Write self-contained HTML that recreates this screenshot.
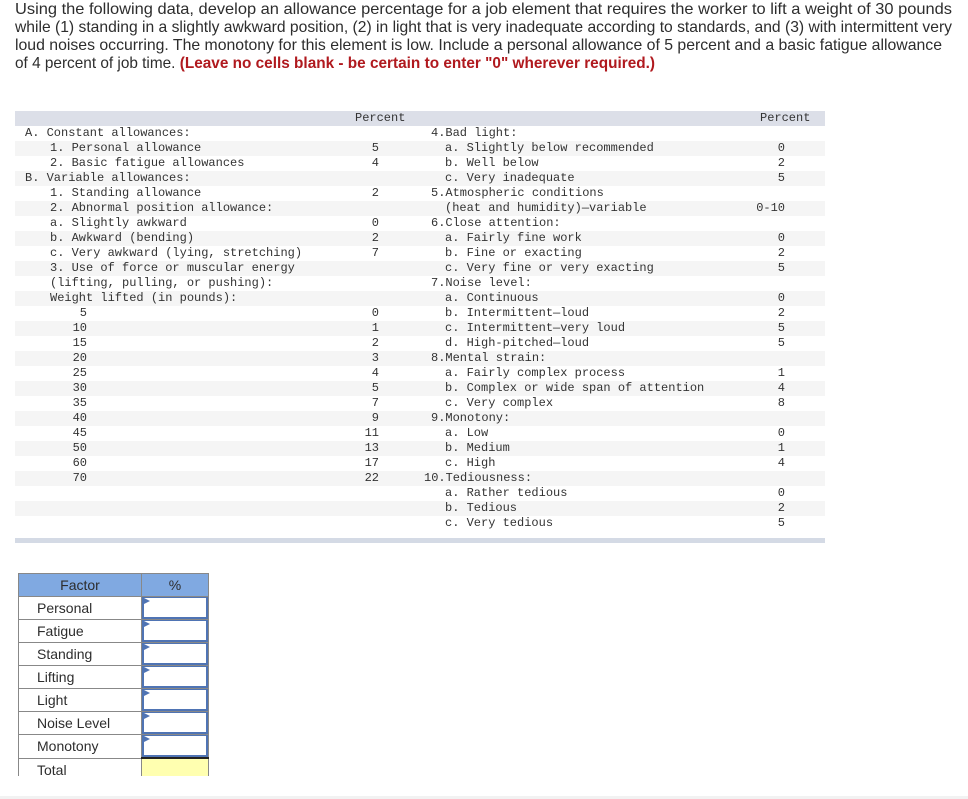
<!DOCTYPE html>
<html><head><meta charset="utf-8"><style>
body{margin:0;width:968px;height:799px;background:#fff;position:relative;overflow:hidden;font-family:"Liberation Sans",sans-serif;color:#2d2d2d}
.q{position:absolute;left:15px;top:1px;font-size:16px;line-height:18px;white-space:nowrap}
.q div{display:block;width:max-content;transform-origin:0 0}
.q b{color:#b0191e}
.tb{position:absolute;left:15px;top:111px;width:810px;font-family:"Liberation Mono",monospace;font-size:12px;color:#333}
.r{position:relative;height:15px;line-height:15px;white-space:pre}
.r:nth-child(odd){background:#f5f5f5}
.h{background:#dcdfe8!important}
.r span{position:absolute;top:0}
.a{left:10px}.b{left:35px}.n{width:72px;text-align:right;left:0}
.v{left:300px;width:64px;text-align:right}
.c{left:416px}.d{left:430px}.e{left:409px}
.w{left:700px;width:70px;text-align:right}
.bar{position:absolute;left:15px;top:538px;width:810px;height:5px;background:#d4dae5}
.ft{position:absolute;left:18px;top:573px;border-collapse:collapse;font-size:14px}
.ft td{border:1px solid #888;height:22px;padding:0}
.ft td.l{width:104px;padding-left:18px}
.ft td.p{width:66px;position:relative}
.ft th{background:#80a9e1;border:1px solid #888;height:22px;padding:0;font-weight:normal}
.in{position:absolute;left:0;top:0;right:0;bottom:0;border:2px solid #4f74b4;border-top-width:1px;background:#fff}
.in:before{content:"";position:absolute;left:0;top:0;border-left:6px solid #4f74b4;border-top:3px solid transparent;border-bottom:3px solid transparent}
</style></head><body>
<div class="q">
<div data-w="937">Using the following data, develop an allowance percentage for a job element that requires the worker to lift a weight of 30 pounds</div>
<div data-w="937">while (1) standing in a slightly awkward position, (2) in light that is very inadequate according to standards, and (3) with intermittent very</div>
<div data-w="927">loud noises occurring. The monotony for this element is low. Include a personal allowance of 5 percent and a basic fatigue allowance</div>
<div data-w="640">of 4 percent of job time. <b>(Leave no cells blank - be certain to enter "0" wherever required.)</b></div>
</div>
<script>
document.querySelectorAll('.q div').forEach(function(d){var w=d.getBoundingClientRect().width;var t=+d.getAttribute('data-w');if(w>0)d.style.transform='scaleX('+(t/w)+')';});
</script>
<div class="tb">
<div class="r h"><span class="v" style="left:340px;width:auto">Percent</span><span style="left:745px">Percent</span></div>
<div class="r"><span class="a">A. Constant allowances:</span><span class="c">4.Bad light:</span></div>
<div class="r"><span class="b">1. Personal allowance</span><span class="v">5</span><span class="d">a. Slightly below recommended</span><span class="w">0</span></div>
<div class="r"><span class="b">2. Basic fatigue allowances</span><span class="v">4</span><span class="d">b. Well below</span><span class="w">2</span></div>
<div class="r"><span class="a">B. Variable allowances:</span><span class="d">c. Very inadequate</span><span class="w">5</span></div>
<div class="r"><span class="b">1. Standing allowance</span><span class="v">2</span><span class="c">5.Atmospheric conditions</span></div>
<div class="r"><span class="b">2. Abnormal position allowance:</span><span class="d">(heat and humidity)—variable</span><span class="w">0-10</span></div>
<div class="r"><span class="b">a. Slightly awkward</span><span class="v">0</span><span class="c">6.Close attention:</span></div>
<div class="r"><span class="b">b. Awkward (bending)</span><span class="v">2</span><span class="d">a. Fairly fine work</span><span class="w">0</span></div>
<div class="r"><span class="b">c. Very awkward (lying, stretching)</span><span class="v">7</span><span class="d">b. Fine or exacting</span><span class="w">2</span></div>
<div class="r"><span class="b">3. Use of force or muscular energy</span><span class="d">c. Very fine or very exacting</span><span class="w">5</span></div>
<div class="r"><span class="b">(lifting, pulling, or pushing):</span><span class="c">7.Noise level:</span></div>
<div class="r"><span class="b">Weight lifted (in pounds):</span><span class="d">a. Continuous</span><span class="w">0</span></div>
<div class="r"><span class="n">5</span><span class="v">0</span><span class="d">b. Intermittent—loud</span><span class="w">2</span></div>
<div class="r"><span class="n">10</span><span class="v">1</span><span class="d">c. Intermittent—very loud</span><span class="w">5</span></div>
<div class="r"><span class="n">15</span><span class="v">2</span><span class="d">d. High-pitched—loud</span><span class="w">5</span></div>
<div class="r"><span class="n">20</span><span class="v">3</span><span class="c">8.Mental strain:</span></div>
<div class="r"><span class="n">25</span><span class="v">4</span><span class="d">a. Fairly complex process</span><span class="w">1</span></div>
<div class="r"><span class="n">30</span><span class="v">5</span><span class="d">b. Complex or wide span of attention</span><span class="w">4</span></div>
<div class="r"><span class="n">35</span><span class="v">7</span><span class="d">c. Very complex</span><span class="w">8</span></div>
<div class="r"><span class="n">40</span><span class="v">9</span><span class="c">9.Monotony:</span></div>
<div class="r"><span class="n">45</span><span class="v">11</span><span class="d">a. Low</span><span class="w">0</span></div>
<div class="r"><span class="n">50</span><span class="v">13</span><span class="d">b. Medium</span><span class="w">1</span></div>
<div class="r"><span class="n">60</span><span class="v">17</span><span class="d">c. High</span><span class="w">4</span></div>
<div class="r"><span class="n">70</span><span class="v">22</span><span class="e">10.Tediousness:</span></div>
<div class="r"><span class="d">a. Rather tedious</span><span class="w">0</span></div>
<div class="r"><span class="d">b. Tedious</span><span class="w">2</span></div>
<div class="r"><span class="d">c. Very tedious</span><span class="w">5</span></div>
</div>
<div class="bar"></div>
<table class="ft">
<tr><th>Factor</th><th>%</th></tr>
<tr><td class="l">Personal</td><td class="p"><div class="in"></div></td></tr>
<tr><td class="l">Fatigue</td><td class="p"><div class="in"></div></td></tr>
<tr><td class="l">Standing</td><td class="p"><div class="in"></div></td></tr>
<tr><td class="l">Lifting</td><td class="p"><div class="in"></div></td></tr>
<tr><td class="l">Light</td><td class="p"><div class="in"></div></td></tr>
<tr><td class="l">Noise Level</td><td class="p"><div class="in"></div></td></tr>
<tr><td class="l">Monotony</td><td class="p"><div class="in"></div></td></tr>
<tr><td class="l" style="border-bottom:none">Total</td><td class="p" style="background:#ffffb0;border-bottom:none;border-top:2px solid #222"></td></tr>
</table>
<div style="position:absolute;left:0;top:776px;width:968px;height:23px;background:#fff"></div>
<div style="position:absolute;left:0;top:796px;width:968px;height:3px;background:#f2f2f2"></div>
</body></html>
